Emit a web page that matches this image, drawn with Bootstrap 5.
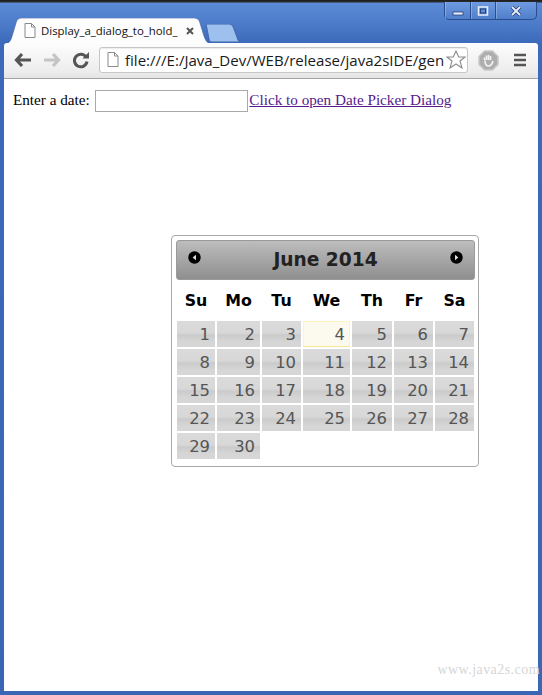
<!DOCTYPE html>
<html lang="en">
<head>
<meta charset="utf-8">
<title>Display_a_dialog_to_hold_</title>
<link rel="stylesheet" href="https://cdn.jsdelivr.net/npm/bootstrap@5.3.0/dist/css/bootstrap.min.css">
<style>
html,body{height:695px;margin:0;overflow:hidden;background:#3a66b4}
.win-frame{width:542px;height:695px;background:linear-gradient(#1c1c1c 0,#2c2c2c 2px,#5b8ad6 3px,#4f7fcc 20px,#3c69ba 44px,#3a66b4 100%);padding:0 4px 4px 4px;position:relative;overflow:hidden}
.win-ctrls{position:absolute;top:2px;right:5px;width:93px;height:18px;border:1px solid #2b4d8c;border-top:0;border-radius:0 0 5px 5px;background:linear-gradient(#6f9be0,#4f7ecb)}
.win-btn{height:100%;border-right:1px solid #2b4d8c;box-shadow:inset 1px 0 0 rgba(255,255,255,.25)}
.win-btn:last-child{border-right:0}
.tab-strip{height:44px;padding-left:1px;flex:none}
.tab-live{position:relative;width:203px;height:26px;font:11.4px "Open Sans",sans-serif;color:#111;padding:0 0 0 36px;margin-top:18px;white-space:nowrap}
.tab-shape{position:absolute;left:0;top:0}
.tab-name{position:relative;line-height:26px;color:#111;letter-spacing:0}
.tab-x{position:absolute;left:180px;top:8px}
.tab-new{margin:24px 0 0 -2px}
.tool-bar{height:36px;background:linear-gradient(#fdfdfd 0,#ededed 28px,#e4e4e4 100%);border-bottom:1px solid #a3a3a3;border-radius:3px 3px 0 0;margin-top:-1px;position:relative;flex:none}
.nav-ico{position:absolute;top:8px}
.omni{position:absolute;left:95px;top:4px;width:369px;height:26px;background:#fff;border:1px solid #c6c6c6;border-radius:3px;box-shadow:inset 0 1px 1px rgba(0,0,0,.08);font:15.05px "Open Sans",sans-serif;color:#1a1a1a;line-height:24px;padding-left:25px;white-space:nowrap}
.page-area{background:#fff;flex:1 1 auto;position:relative;font:15.2px/20px "Liberation Serif",serif;color:#000;padding:11px 9px;min-height:0;white-space:nowrap}
.date-in{width:153px;height:22px;border:1px solid #a9a9a9;background:#fff;padding:0;margin:0 0 0 1px;vertical-align:middle;position:relative;top:-1px}
.dlg-link{color:#551a8b;text-decoration:underline;margin-left:-2px}
.picker{position:absolute;left:167px;top:156px;width:308px;height:232px;background:#fff;border:1px solid #a9a9a9;border-radius:4px;padding:4px;font-family:"DejaVu Sans",sans-serif}
.pick-head{height:40px;width:299px;border:1px solid #9a9a9a;border-radius:3px;background:linear-gradient(#bdbdbd,#8f8f8f);color:#222;font-weight:700;font-size:18.6px;line-height:38px;text-align:center;position:relative}
.pick-arrow{position:absolute;top:10px}
.pick-grid{display:grid;grid-template-columns:38px 43px 39px 47px 40px 39px 39px;column-gap:2px;row-gap:2px;margin-left:1px;width:299px}
.pick-dow{height:39px;font-weight:700;font-size:15.8px;line-height:41px;text-align:center;color:#000}
.pick-day{height:26px;background:linear-gradient(#dadada 0,#d8d8d8 45%,#cbcbcb 55%,#d6d6d6 80%,#d6d6d6 100%);color:#555;font-size:16.4px;line-height:27px;text-align:right;padding-right:5px}
.pick-today{background:#fcfaee;box-shadow:inset 0 -1px 0 #f6e78e,inset 1px 0 0 #fcf3c4,inset -1px 0 0 #fcf3c4,inset 0 1px 0 #fcf3c4}
.mark-java{position:absolute;right:-2px;bottom:13px;font:14px "Liberation Serif",serif;color:#d6d6d6;letter-spacing:.45px}
.chrome-col{height:100%}
</style>
</head>
<body>
<div class="win-frame">
  <div class="d-flex flex-column chrome-col">
    <div class="tab-strip d-flex align-items-start">
      <div class="tab-live">
        <svg class="tab-shape" width="203" height="27" viewBox="0 0 203 27"><path d="M-1 26C5 26 6 22 8 15L11 5C12 1 14 0 17 0H188C192 0 194 1 195 5L198 15C200 22 202 26 207 26V27H-1Z" fill="#fdfdfd" stroke="#3a5f9f" stroke-width=".6"/></svg>
        <svg class="tab-shape" style="left:19px;top:5px" width="12" height="15" viewBox="0 0 12 15"><path d="M1 .5H7.5L11 4V14.5H1Z M7.5 .5V4H11" fill="#fff" stroke="#8a8a8a"/></svg>
        <div class="tab-name">Display_a_dialog_to_hold_</div>
        <svg class="tab-x" width="10" height="10" viewBox="0 0 10 10"><path d="M2 2L8 8M8 2L2 8" stroke="#555" stroke-width="2"/></svg>
      </div>
      <svg class="tab-new" width="34" height="19" viewBox="0 0 34 19"><path d="M0 0H23C26 0 27 2 28 5L32 16C32.500 17 33 18 34 18H6C4 18 3.500 17 3 15Z" fill="#9dc0ee" stroke="#3f67ab"/></svg>
    </div>
    <div class="tool-bar">
      <svg class="nav-ico" style="left:10px;top:8px" width="18" height="18" viewBox="0 0 18 18"><path d="M8 3L2.500 9L8 15M3 9H17" fill="none" stroke="#555" stroke-width="3.200"/></svg>
      <svg class="nav-ico" style="left:39px;top:8px" width="18" height="18" viewBox="0 0 18 18"><path d="M10 3L15.500 9L10 15M15 9H1" fill="none" stroke="#c4c4c4" stroke-width="3.200"/></svg>
      <svg class="nav-ico" style="left:68px;top:8px" width="18" height="18" viewBox="0 0 18 18"><path d="M14 6A6.300 6.300 0 1 0 15 10.500" fill="none" stroke="#555" stroke-width="3"/><path d="M10.500 7.500H17V1Z" fill="#555"/></svg>
      <div class="omni">
        <svg class="position-absolute" style="left:7px;top:4px" width="12" height="15" viewBox="0 0 12 15"><path d="M1 .5H7.5L11 4V14.5H1Z M7.5 .5V4H11" fill="#fff" stroke="#8a8a8a"/></svg>
        file:///E:/Java_Dev/WEB/release/java2sIDE/gen
        <svg class="position-absolute" style="right:1px;top:2px" width="20" height="19" viewBox="0 0 20 19"><path d="M10 1L12.700 7H19L14 11L16 18L10 14L4 18L6 11L1 7H7.300Z" fill="#fff" stroke="#8c8c8c" stroke-width="1.100"/></svg>
      </div>
      <svg class="nav-ico" style="left:474px;top:7px" width="21" height="21" viewBox="0 0 21 21"><path d="M6.500 1H14.500L20 6.500V14.500L14.500 20H6.500L1 14.500V6.500Z" fill="#aeaeae" stroke="#c9c9c9" stroke-width="1.500"/><path d="M6.500 10V7.500M8.500 10V5.500M10.500 10V5M12.500 10V6M7 10.500C7 14 8 16 10.500 16C13 16 14 14.500 15 11" fill="none" stroke="#f4f4f4" stroke-width="1.600"/></svg>
      <svg class="nav-ico" style="left:509px;top:10px" width="14" height="14" viewBox="0 0 14 14"><path d="M1 2H13M1 7H13M1 12H13" stroke="#555" stroke-width="2.500"/></svg>
    </div>
    <div class="page-area">
      Enter a date: <input class="date-in" type="text" aria-label="date"> <a class="dlg-link" href="#">Click to open Date Picker Dialog</a>
      <div class="picker">
        <div class="pick-head">
          <svg class="pick-arrow" style="left:11px" width="13" height="13" viewBox="0 0 13 13"><circle cx="6.500" cy="6.500" r="6.200" fill="#000"/><path d="M8 3.800V9.200L4.600 6.500Z" fill="#ddd"/></svg>
          June 2014
          <svg class="pick-arrow" style="right:11px" width="13" height="13" viewBox="0 0 13 13"><circle cx="6.500" cy="6.500" r="6.200" fill="#000"/><path d="M5 3.800V9.200L8.400 6.500Z" fill="#ddd"/></svg>
        </div>
        <div class="pick-grid">
          <div class="pick-dow">Su</div><div class="pick-dow">Mo</div><div class="pick-dow">Tu</div><div class="pick-dow">We</div><div class="pick-dow">Th</div><div class="pick-dow">Fr</div><div class="pick-dow">Sa</div>
          <div class="pick-day">1</div><div class="pick-day">2</div><div class="pick-day">3</div><div class="pick-day pick-today">4</div><div class="pick-day">5</div><div class="pick-day">6</div><div class="pick-day">7</div>
          <div class="pick-day">8</div><div class="pick-day">9</div><div class="pick-day">10</div><div class="pick-day">11</div><div class="pick-day">12</div><div class="pick-day">13</div><div class="pick-day">14</div>
          <div class="pick-day">15</div><div class="pick-day">16</div><div class="pick-day">17</div><div class="pick-day">18</div><div class="pick-day">19</div><div class="pick-day">20</div><div class="pick-day">21</div>
          <div class="pick-day">22</div><div class="pick-day">23</div><div class="pick-day">24</div><div class="pick-day">25</div><div class="pick-day">26</div><div class="pick-day">27</div><div class="pick-day">28</div>
          <div class="pick-day">29</div><div class="pick-day">30</div>
        </div>
      </div>
      <div class="mark-java">www.java2s.com</div>
    </div>
  </div>
  <div class="win-ctrls d-flex">
    <div class="win-btn d-flex align-items-center justify-content-center" style="width:26px"><svg width="12" height="12" viewBox="0 0 12 12"><rect x="1" y="7" width="10" height="3" fill="#e8eef8" stroke="#24417a" stroke-width=".8"/></svg></div>
    <div class="win-btn d-flex align-items-center justify-content-center" style="width:25px"><svg width="12" height="12" viewBox="0 0 12 12"><rect x="1.500" y="2" width="9" height="8" fill="none" stroke="#e8eef8" stroke-width="1.500"/><rect x="3.500" y="4" width="5" height="4" fill="none" stroke="#24417a" stroke-width="1"/></svg></div>
    <div class="win-btn d-flex align-items-center justify-content-center flex-grow-1"><svg width="14" height="12" viewBox="0 0 14 12"><path d="M3 2L11 10M11 2L3 10" stroke="#24417a" stroke-width="3.400"/><path d="M3 2L11 10M11 2L3 10" stroke="#e8eef8" stroke-width="1.800"/></svg></div>
  </div>
</div>
</body>
</html>
